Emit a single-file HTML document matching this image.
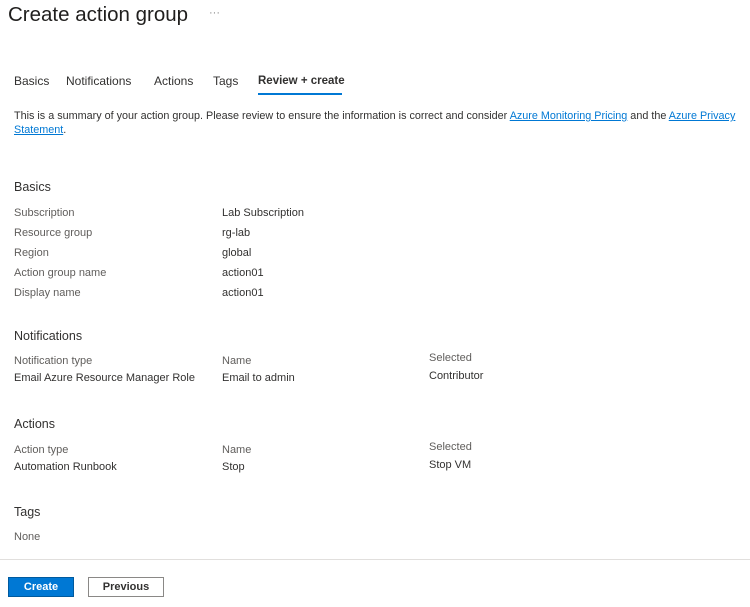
<!DOCTYPE html>
<html><head><meta charset="utf-8"><style>
body{margin:0;width:750px;height:607px;background:#fff;font-family:"Liberation Sans",sans-serif;color:#323130;position:relative;overflow:hidden}
.a{position:absolute;white-space:nowrap;font-size:11px;line-height:14px}
.l{color:#605e5c}
.h{font-size:12.5px;color:#323130}
a{color:#0078d4;text-decoration:underline}
</style></head><body>
<div class="a" style="left:8px;top:3px;font-size:20.5px;line-height:24px;color:#201f1e">Create action group</div>
<div class="a" style="left:209px;top:6px;font-size:11px;color:#888">···</div>
<div class="a" style="left:14px;top:74px;font-size:12px">Basics</div>
<div class="a" style="left:66px;top:74px;font-size:12px">Notifications</div>
<div class="a" style="left:154px;top:74px;font-size:12px">Actions</div>
<div class="a" style="left:213px;top:74px;font-size:12px">Tags</div>
<div class="a" style="left:258px;top:74px;font-size:11.5px;font-weight:bold">Review + create</div>
<div style="position:absolute;left:258px;top:93px;width:84px;height:2px;background:#0078d4"></div>
<div class="a" style="left:14px;top:109px;font-size:10.8px">This is a summary of your action group. Please review to ensure the information is correct and consider <a>Azure Monitoring Pricing</a> and the <a>Azure Privacy</a></div>
<div class="a" style="left:14px;top:123px;font-size:10.8px"><a>Statement</a>.</div>
<div class="a h" style="left:14px;top:180px">Basics</div>
<div class="a l" style="left:14px;top:206px">Subscription</div><div class="a" style="left:222px;top:206px">Lab Subscription</div>
<div class="a l" style="left:14px;top:226px">Resource group</div><div class="a" style="left:222px;top:226px">rg-lab</div>
<div class="a l" style="left:14px;top:246px">Region</div><div class="a" style="left:222px;top:246px">global</div>
<div class="a l" style="left:14px;top:266px">Action group name</div><div class="a" style="left:222px;top:266px">action01</div>
<div class="a l" style="left:14px;top:286px">Display name</div><div class="a" style="left:222px;top:286px">action01</div>
<div class="a h" style="left:14px;top:329px">Notifications</div>
<div class="a l" style="left:14px;top:354px">Notification type</div><div class="a l" style="left:222px;top:354px">Name</div><div class="a l" style="left:429px;top:351px">Selected</div>
<div class="a" style="left:14px;top:371px">Email Azure Resource Manager Role</div><div class="a" style="left:222px;top:371px">Email to admin</div><div class="a" style="left:429px;top:369px">Contributor</div>
<div class="a h" style="left:14px;top:417px">Actions</div>
<div class="a l" style="left:14px;top:443px">Action type</div><div class="a l" style="left:222px;top:443px">Name</div><div class="a l" style="left:429px;top:440px">Selected</div>
<div class="a" style="left:14px;top:460px">Automation Runbook</div><div class="a" style="left:222px;top:460px">Stop</div><div class="a" style="left:429px;top:458px">Stop VM</div>
<div class="a h" style="left:14px;top:505px">Tags</div>
<div class="a l" style="left:14px;top:530px">None</div>
<div style="position:absolute;left:0;top:559px;width:750px;height:1px;background:#e1dfdd"></div>
<div style="position:absolute;left:8px;top:577px;width:64px;height:18px;background:#0078d4;border:1px solid #005a9e;color:#fff;font-size:11px;font-weight:bold;line-height:18px;text-align:center">Create</div>
<div style="position:absolute;left:88px;top:577px;width:74px;height:18px;background:#fff;border:1px solid #8a8886;color:#323130;font-size:11px;font-weight:bold;line-height:18px;text-align:center">Previous</div>
</body></html>
